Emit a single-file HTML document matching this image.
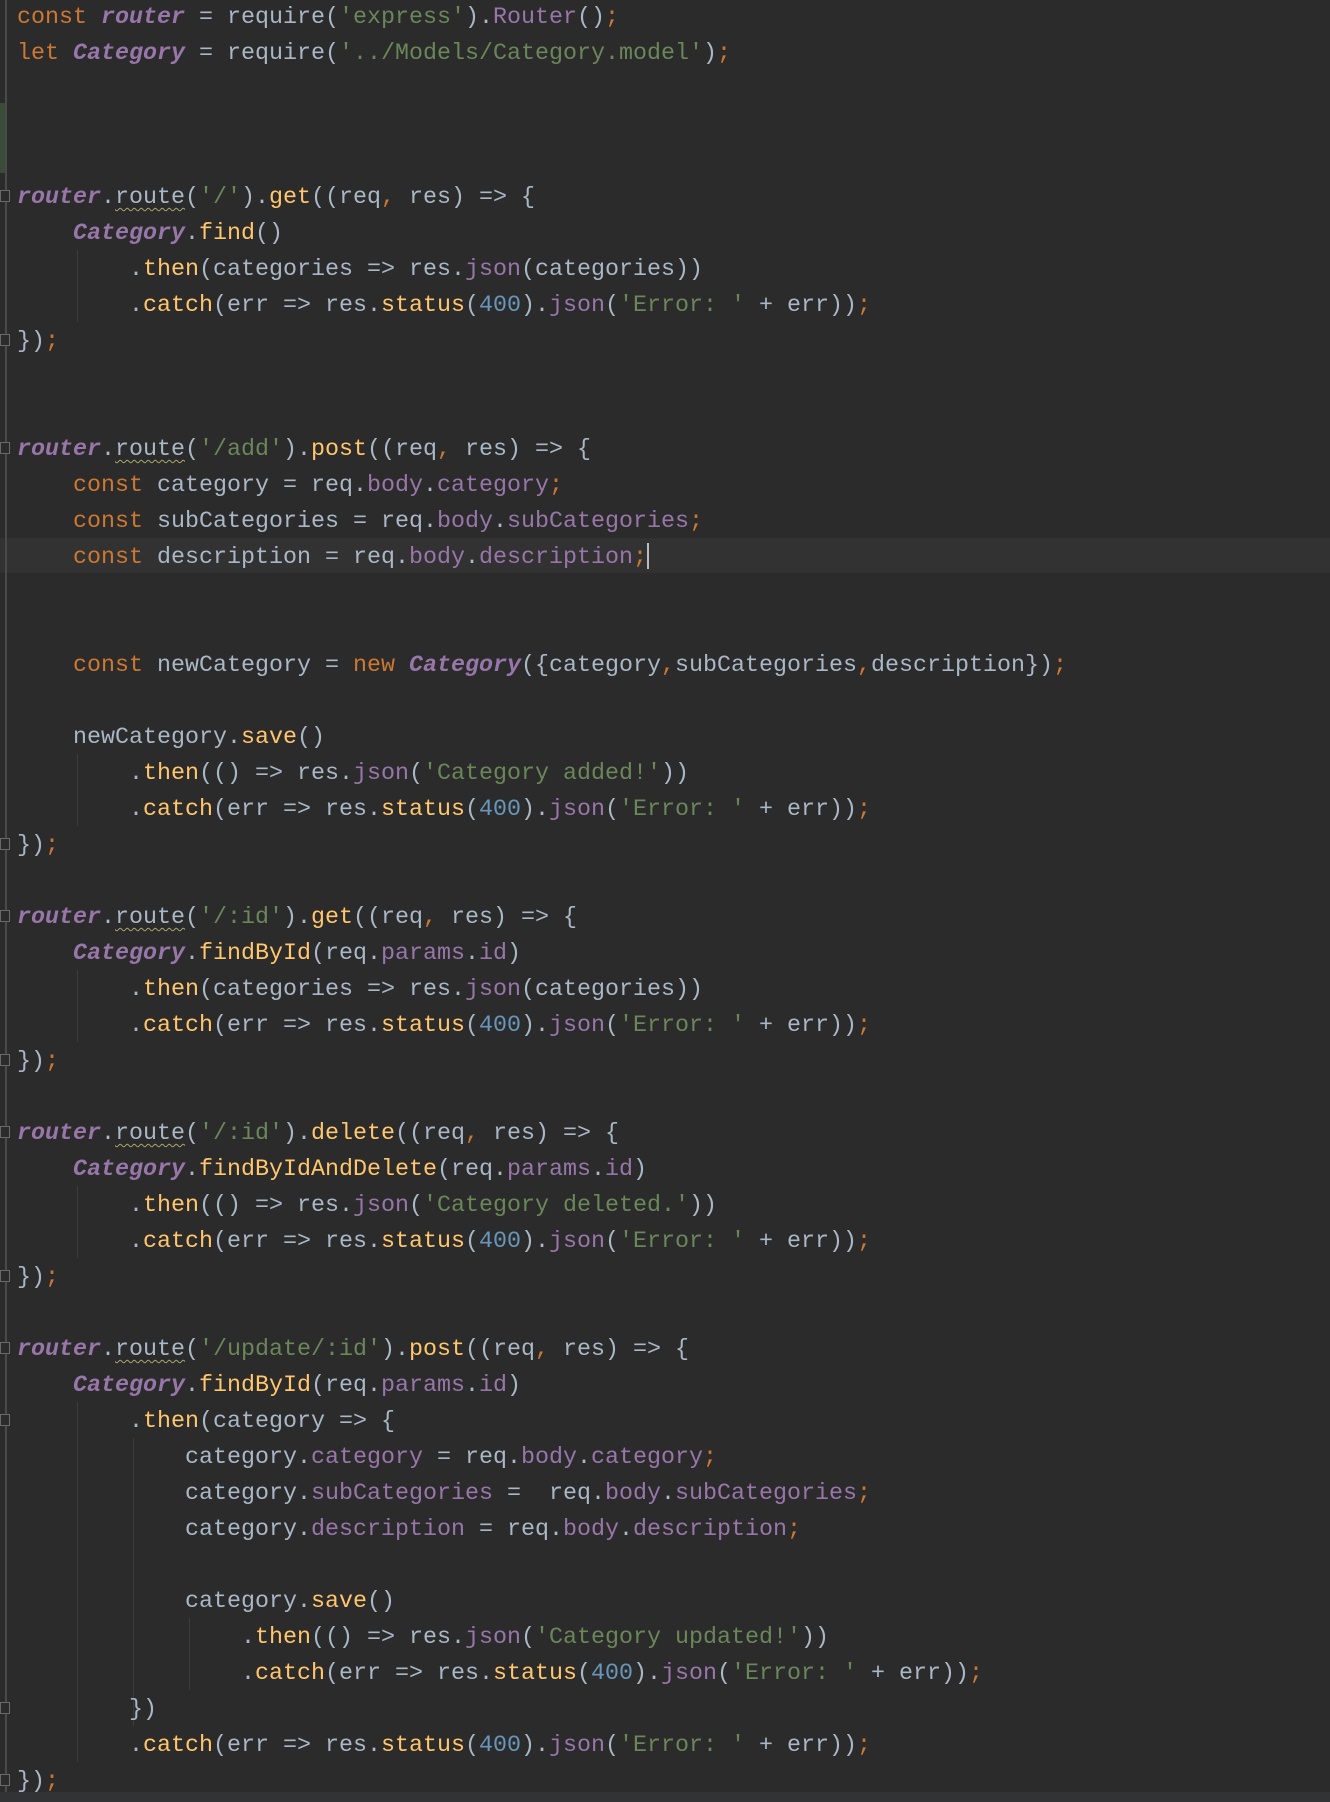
<!DOCTYPE html>
<html><head><meta charset="utf-8"><style>
html,body{margin:0;padding:0;background:#2b2b2b;width:1330px;height:1802px;overflow:hidden;position:relative}
.code{position:absolute;left:17px;top:0px;font-family:"Liberation Mono",monospace;font-size:23.33px;line-height:36px;color:#a9b7c6;white-space:pre}
.k{color:#cc7832}.s{color:#6a8759}.p{color:#9876aa}.pi{color:#9876aa;font-style:italic;font-weight:bold}.f{color:#ffc66d}.n{color:#6897bb}
.w{text-decoration:underline wavy #a8a86a;text-decoration-thickness:1px;text-underline-offset:4px}
.hl{position:absolute;left:0;top:538px;width:1330px;height:35px;background:#323232}
.g{position:absolute;width:1px;background:#3b3b3b}
.gut{position:absolute;left:5px;top:0;width:2px;height:1792px;background:#4a4a4a}
.bot{position:absolute;left:0;top:1792px;width:1330px;height:10px;background:#313335}
.chg{position:absolute;left:0;top:103px;width:5px;height:70px;background:#384c38}
.caret{position:absolute;left:647px;top:543px;width:2px;height:26px;background:#bbbbbb}
.fold{position:absolute;left:0;width:10px;height:12px;border:1px solid #6a6a6a;box-sizing:border-box;background:#2b2b2b}
</style></head><body>
<div class="hl"></div>
<div class="gut"></div>
<div class="chg"></div>
<div class="bot"></div>
<div class="g" style="left:77px;top:250px;height:72px"></div>
<div class="g" style="left:77px;top:754px;height:72px"></div>
<div class="g" style="left:77px;top:970px;height:72px"></div>
<div class="g" style="left:77px;top:1186px;height:72px"></div>
<div class="g" style="left:77px;top:1402px;height:360px"></div>
<div class="g" style="left:133px;top:1438px;height:288px"></div>
<div class="g" style="left:189px;top:1618px;height:72px"></div>
<div class="fold" style="top:190px"></div><div class="fold" style="top:334px"></div>
<div class="fold" style="top:442px"></div><div class="fold" style="top:838px"></div>
<div class="fold" style="top:910px"></div><div class="fold" style="top:1054px"></div>
<div class="fold" style="top:1126px"></div><div class="fold" style="top:1270px"></div>
<div class="fold" style="top:1342px"></div><div class="fold" style="top:1414px"></div>
<div class="fold" style="top:1702px"></div><div class="fold" style="top:1774px"></div>
<div class="caret"></div>
<div class="code"><span class="k">const </span><span class="pi">router</span> = require(<span class="s">'express'</span>).<span class="p">Router</span>()<span class="k">;</span>
<span class="k">let </span><span class="pi">Category</span> = require(<span class="s">'../Models/Category.model'</span>)<span class="k">;</span>



<span class="pi">router</span>.<span class="w">route</span>(<span class="s">'/'</span>).<span class="f">get</span>((req<span class="k">,</span> res) =&gt; {
    <span class="pi">Category</span>.<span class="f">find</span>()
        .<span class="f">then</span>(categories =&gt; res.<span class="p">json</span>(categories))
        .<span class="f">catch</span>(err =&gt; res.<span class="f">status</span>(<span class="n">400</span>).<span class="p">json</span>(<span class="s">'Error: '</span> + err))<span class="k">;</span>
})<span class="k">;</span>


<span class="pi">router</span>.<span class="w">route</span>(<span class="s">'/add'</span>).<span class="f">post</span>((req<span class="k">,</span> res) =&gt; {
    <span class="k">const </span>category = req.<span class="p">body</span>.<span class="p">category</span><span class="k">;</span>
    <span class="k">const </span>subCategories = req.<span class="p">body</span>.<span class="p">subCategories</span><span class="k">;</span>
    <span class="k">const </span>description = req.<span class="p">body</span>.<span class="p">description</span><span class="k">;</span>


    <span class="k">const </span>newCategory = <span class="k">new </span><span class="pi">Category</span>({category<span class="k">,</span>subCategories<span class="k">,</span>description})<span class="k">;</span>

    newCategory.<span class="f">save</span>()
        .<span class="f">then</span>(() =&gt; res.<span class="p">json</span>(<span class="s">'Category added!'</span>))
        .<span class="f">catch</span>(err =&gt; res.<span class="f">status</span>(<span class="n">400</span>).<span class="p">json</span>(<span class="s">'Error: '</span> + err))<span class="k">;</span>
})<span class="k">;</span>

<span class="pi">router</span>.<span class="w">route</span>(<span class="s">'/:id'</span>).<span class="f">get</span>((req<span class="k">,</span> res) =&gt; {
    <span class="pi">Category</span>.<span class="f">findById</span>(req.<span class="p">params</span>.<span class="p">id</span>)
        .<span class="f">then</span>(categories =&gt; res.<span class="p">json</span>(categories))
        .<span class="f">catch</span>(err =&gt; res.<span class="f">status</span>(<span class="n">400</span>).<span class="p">json</span>(<span class="s">'Error: '</span> + err))<span class="k">;</span>
})<span class="k">;</span>

<span class="pi">router</span>.<span class="w">route</span>(<span class="s">'/:id'</span>).<span class="f">delete</span>((req<span class="k">,</span> res) =&gt; {
    <span class="pi">Category</span>.<span class="f">findByIdAndDelete</span>(req.<span class="p">params</span>.<span class="p">id</span>)
        .<span class="f">then</span>(() =&gt; res.<span class="p">json</span>(<span class="s">'Category deleted.'</span>))
        .<span class="f">catch</span>(err =&gt; res.<span class="f">status</span>(<span class="n">400</span>).<span class="p">json</span>(<span class="s">'Error: '</span> + err))<span class="k">;</span>
})<span class="k">;</span>

<span class="pi">router</span>.<span class="w">route</span>(<span class="s">'/update/:id'</span>).<span class="f">post</span>((req<span class="k">,</span> res) =&gt; {
    <span class="pi">Category</span>.<span class="f">findById</span>(req.<span class="p">params</span>.<span class="p">id</span>)
        .<span class="f">then</span>(category =&gt; {
            category.<span class="p">category</span> = req.<span class="p">body</span>.<span class="p">category</span><span class="k">;</span>
            category.<span class="p">subCategories</span> =  req.<span class="p">body</span>.<span class="p">subCategories</span><span class="k">;</span>
            category.<span class="p">description</span> = req.<span class="p">body</span>.<span class="p">description</span><span class="k">;</span>

            category.<span class="f">save</span>()
                .<span class="f">then</span>(() =&gt; res.<span class="p">json</span>(<span class="s">'Category updated!'</span>))
                .<span class="f">catch</span>(err =&gt; res.<span class="f">status</span>(<span class="n">400</span>).<span class="p">json</span>(<span class="s">'Error: '</span> + err))<span class="k">;</span>
        })
        .<span class="f">catch</span>(err =&gt; res.<span class="f">status</span>(<span class="n">400</span>).<span class="p">json</span>(<span class="s">'Error: '</span> + err))<span class="k">;</span>
})<span class="k">;</span></div>
</body></html>
